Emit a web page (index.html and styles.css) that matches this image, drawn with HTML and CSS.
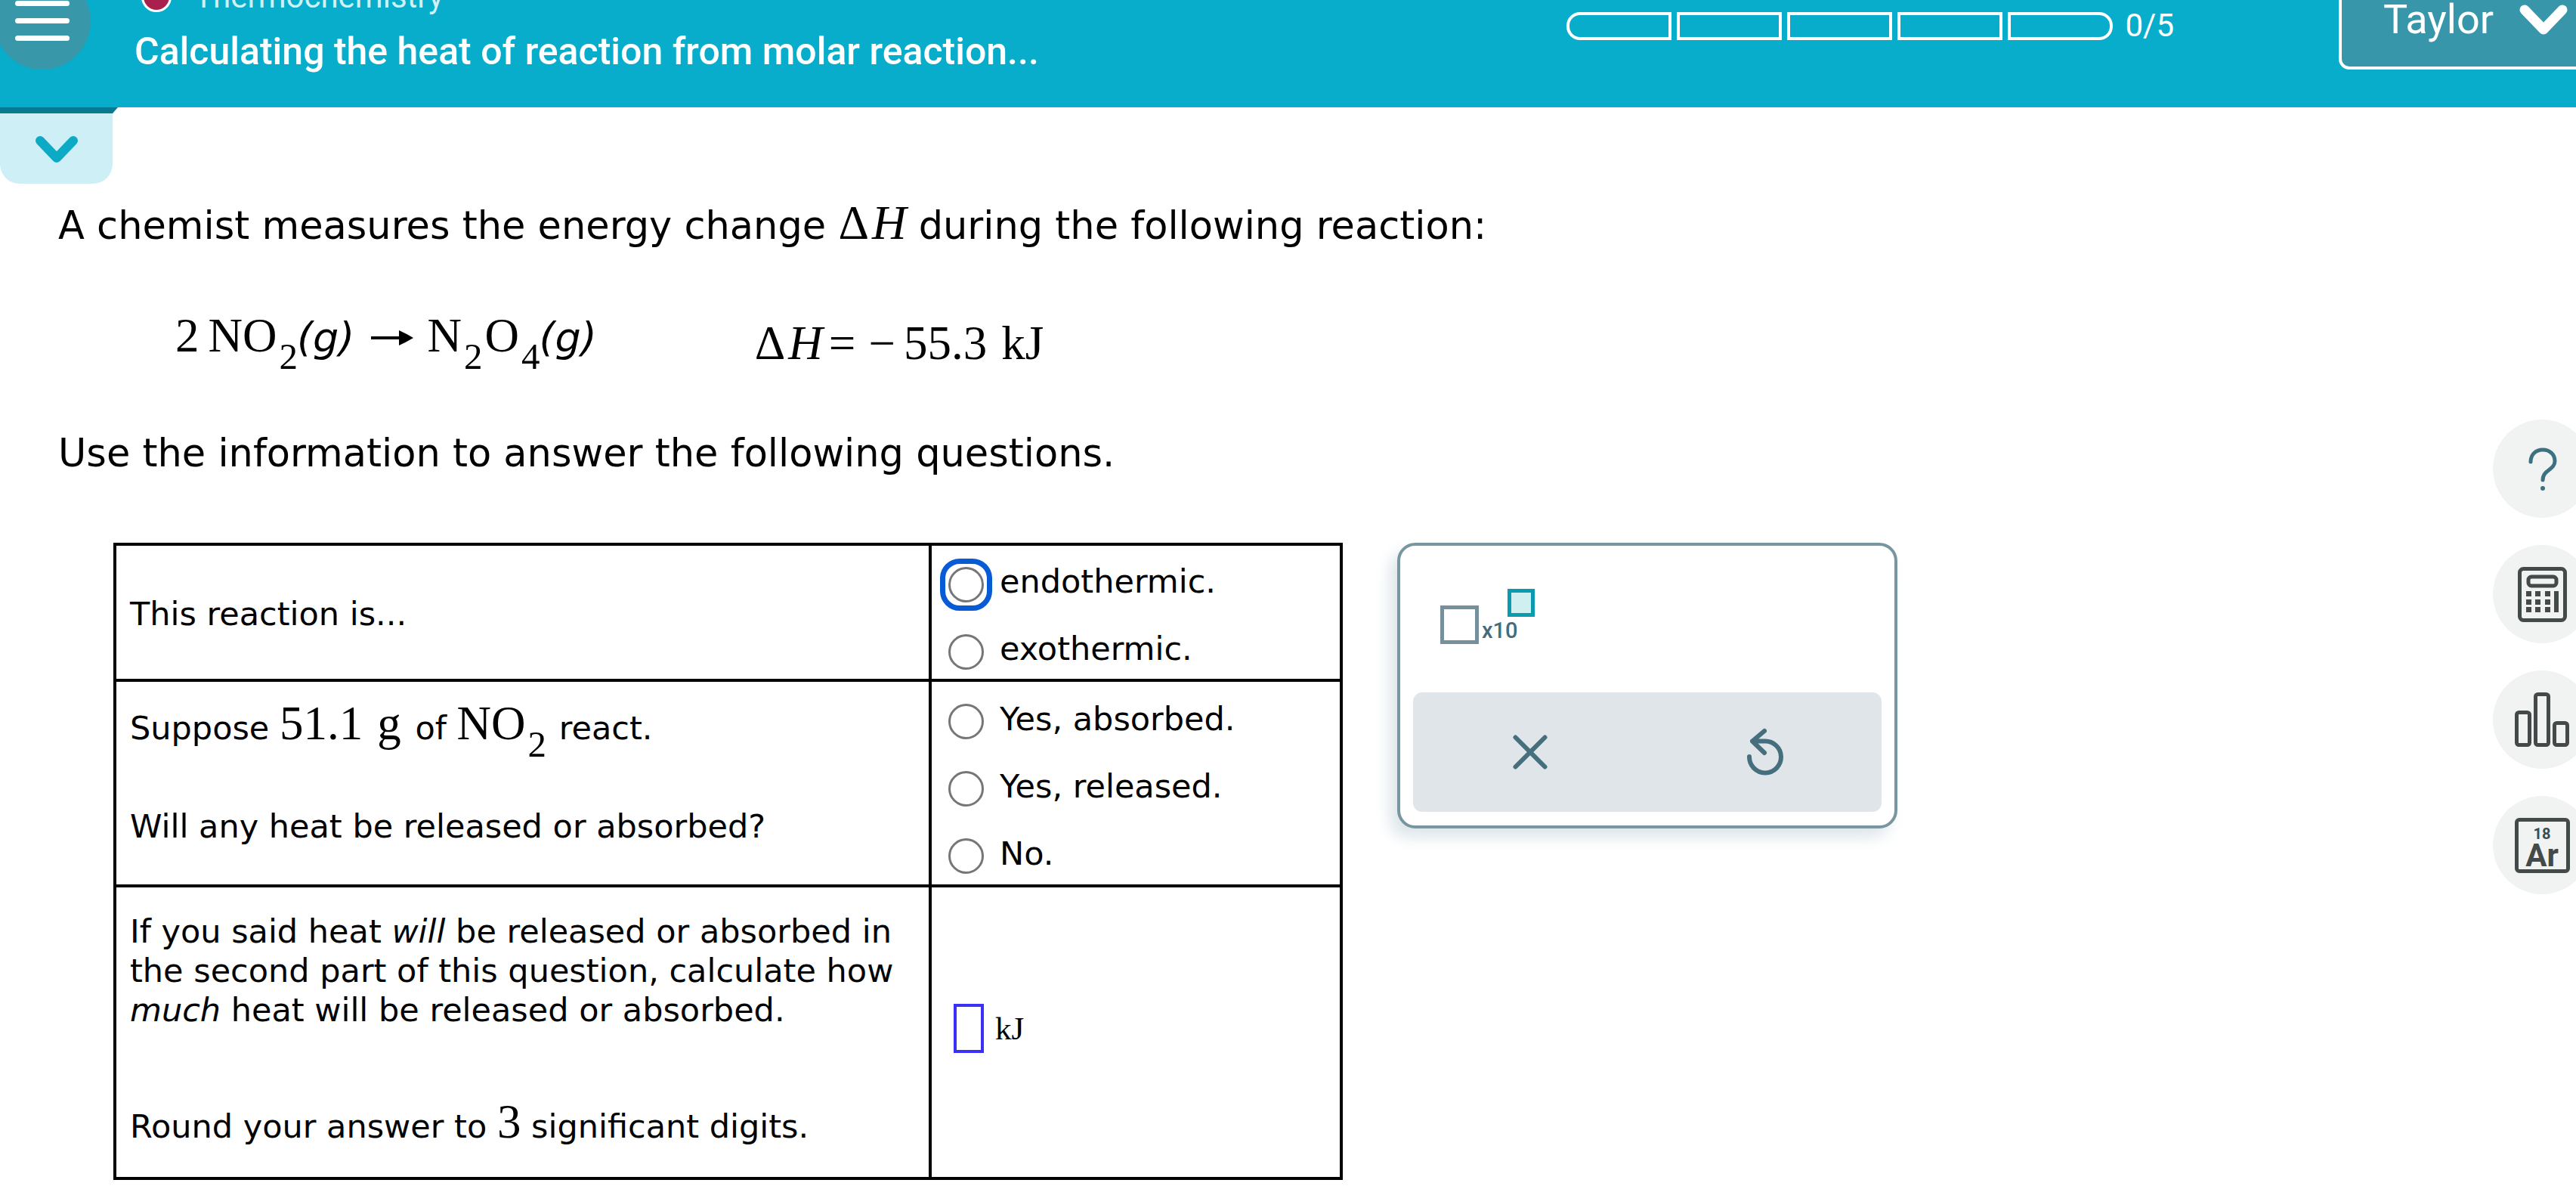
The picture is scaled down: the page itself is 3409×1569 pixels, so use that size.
FILE: index.html
```html
<!DOCTYPE html>
<html lang="en">
<head>
<meta charset="utf-8">
<title>Calculating the heat of reaction</title>
<link rel="stylesheet" href="styles.css">
</head>
<body>
<header class="topbar">
  <button class="menu-button" aria-label="Menu"><span class="menu-bar"></span><span class="menu-bar"></span><span class="menu-bar"></span></button>
  <div class="heading">
    <p class="topic"><span class="topic-dot"></span>Thermochemistry</p>
    <h1 class="title">Calculating the heat of reaction from molar reaction...</h1>
  </div>
  <div class="progress">
    <div class="steps"><span class="step"></span><span class="step"></span><span class="step"></span><span class="step"></span><span class="step"></span></div>
    <span class="score">0/5</span>
  </div>
  <button class="user-button">Taylor
    <svg class="user-chevron" viewBox="0 0 64 42" aria-hidden="true"><path d="M7 8 32 34 57 8"/></svg>
  </button>
</header>

<main>
  <button class="drawer-tab" aria-label="Expand">
    <svg class="drawer-lip" viewBox="0 0 156 8" aria-hidden="true"><path d="M0 0H156L149 8H0z"/></svg>
    <span class="drawer-body"><svg class="drawer-chevron" viewBox="0 0 58 38" aria-hidden="true"><path d="M7 7 29 30 51 7"/></svg></span>
  </button>

  <section class="problem">
    <p>A chemist measures the energy change <span class="math">Δ<i class="var">H</i></span> during the following reaction:</p>
    <div class="reaction">
      <div class="equation"><span class="coef">2</span>NO<sub>2</sub><i class="state">(g)</i><svg class="arrow" viewBox="0 0 56 36" aria-hidden="true"><path d="M0 16H37V8Q46 12 56 18Q46 24 37 28V20H0z"/></svg>N<sub>2</sub>O<sub>4</sub><i class="state">(g)</i></div>
      <div class="equation enthalpy">Δ<i class="var">H</i><span class="op">=</span><span class="op minus">−</span>55.3<span class="unit">kJ</span></div>
    </div>
    <p>Use the information to answer the following questions.</p>

    <div class="workspace">
      <table class="questions">
        <tr class="row-one">
          <td class="prompt">This reaction is...</td>
          <td class="answer">
            <div class="options">
              <label class="option"><input class="radio is-focused" type="radio" name="kind">endothermic.</label>
              <label class="option"><input class="radio" type="radio" name="kind">exothermic.</label>
            </div>
          </td>
        </tr>
        <tr class="row-two">
          <td class="prompt">
            <p class="suppose">Suppose <span class="math">51.1<span class="unit">g</span></span> of <span class="math">NO<sub>2</sub></span> react.</p>
            <p>Will any heat be released or absorbed?</p>
          </td>
          <td class="answer">
            <div class="options">
              <label class="option"><input class="radio" type="radio" name="heat">Yes, absorbed.</label>
              <label class="option"><input class="radio" type="radio" name="heat">Yes, released.</label>
              <label class="option"><input class="radio" type="radio" name="heat">No.</label>
            </div>
          </td>
        </tr>
        <tr class="row-three">
          <td class="prompt">
            <p class="explain">If you said heat <i>will</i> be released or absorbed in the second part of this question, calculate how <i>much</i> heat will be released or absorbed.</p>
            <p>Round your answer to <span class="math">3</span> significant digits.</p>
          </td>
          <td class="answer">
            <label class="amount"><input class="amount-box" type="text" aria-label="Heat in kJ">kJ</label>
          </td>
        </tr>
      </table>

      <aside class="keypad">
        <button class="sci-button" aria-label="Scientific notation"><span class="sci-base"></span><span class="sci-text">x10</span><span class="sci-exp"></span></button>
        <div class="keypad-actions">
          <button class="key" aria-label="Clear"><svg class="key-icon" viewBox="0 0 64 64"><path d="M12.500 12.500 51.500 51.500M51.500 12.500 12.500 51.500"/></svg></button>
          <button class="key" aria-label="Reset"><svg class="key-icon" viewBox="0 0 64 64"><path d="M32 4 16 17.500 32 33M16 17.500H32A21 21 0 1 1 12 38"/></svg></button>
        </div>
      </aside>
    </div>
  </section>
</main>

<nav class="rail" aria-label="Tools">
  <button class="tool help" aria-label="Help"><svg class="tool-icon" viewBox="0 0 130 130"><path d="M50 56C50 46 57 40 66 40S82 46 82 55C82 67 66 66 66 80"/><circle class="solid" cx="66" cy="91" r="3"/></svg></button>
  <button class="tool" aria-label="Calculator"><svg class="tool-icon" viewBox="0 0 130 130"><rect x="35.500" y="31.500" width="60" height="68" rx="5"/><rect x="47" y="42" width="37" height="12" rx="4"/><path class="solid" d="M44 61h7v7h-7zM56 61h7v7h-7zM69 61h7v7h-7zM44 72h7v7h-7zM56 72h7v7h-7zM69 72h7v7h-7zM44 82h7v7h-7zM56 82h7v7h-7zM69 82h7v7h-7zM81 61h6v28h-6z"/></svg></button>
  <button class="tool" aria-label="Data"><svg class="tool-icon" viewBox="0 0 130 130"><rect x="31.500" y="55.500" width="17" height="43" rx="3"/><rect x="56.500" y="31.500" width="17" height="67" rx="3"/><rect x="81.500" y="69.500" width="17" height="29" rx="3"/></svg></button>
  <button class="tool" aria-label="Periodic table"><span class="element"><span class="element-number">18</span><span class="element-symbol">Ar</span></span></button>
</nav>
</body>
</html>
```
FILE: styles.css
```css
* { box-sizing: border-box; }

body {
  margin: 0;
  background: #fff;
  color: #000;
  font-family: "DejaVu Sans", Verdana, sans-serif;
  font-size: 51px;
  line-height: 60px;
  overflow-x: hidden;
}

p, h1 { margin: 0; }

button {
  border: 0;
  padding: 0;
  background: none;
  color: inherit;
  font: inherit;
  cursor: pointer;
}

svg { display: block; fill: none; stroke-linecap: round; stroke-linejoin: round; }

/* Top bar */
.topbar {
  display: flex;
  align-items: flex-start;
  height: 142px;
  overflow: hidden;
  background: #07adca;
  color: #fff;
  font-family: Roboto, sans-serif;
}

.menu-button {
  display: flex;
  flex: none;
  flex-direction: column;
  align-items: center;
  gap: 16px;
  width: 128px;
  height: 128px;
  margin: -36px 0 0 -8px;
  padding-top: 37px;
  border-radius: 50%;
  background: #3997aa;
}

.menu-bar {
  width: 72px;
  height: 7px;
  border-radius: 4px;
  background: #fff;
}

.heading { margin: -40px 0 0 58px; }

.topic {
  display: flex;
  align-items: center;
  gap: 30px;
  padding-left: 9px;
  color: #d2f1f6;
  font-size: 42px;
  line-height: 72px;
}

.topic-dot {
  width: 40px;
  height: 40px;
  border: 3px solid #fff;
  border-radius: 50%;
  background: #a91f4d;
}

.title {
  font-size: 50px;
  font-weight: 500;
  line-height: 72px;
  white-space: nowrap;
}

.progress {
  display: flex;
  align-items: center;
  gap: 16px;
  margin: 4px 218px 0 auto;
  font-size: 42px;
}

.steps { display: flex; gap: 7px; }

.step {
  width: 139px;
  height: 37px;
  border: 4px solid #fff;
}

.step:first-child { border-radius: 18px 0 0 18px; }
.step:last-child { border-radius: 0 18px 18px 0; }

.user-button {
  display: flex;
  flex: none;
  align-items: center;
  gap: 34px;
  width: 334px;
  height: 112px;
  margin: -20px -20px 0 0;
  padding: 0 0 20px 55px;
  border: 4px solid #fff;
  border-radius: 14px;
  background: #3796a9;
  font-size: 54px;
}

.user-chevron { width: 64px; stroke: #fff; stroke-width: 13; }

/* Drawer handle under the bar */
.drawer-tab { display: block; width: 156px; }
.drawer-lip { width: 156px; fill: #057a90; }

.drawer-body {
  display: flex;
  align-items: center;
  justify-content: center;
  width: 149px;
  height: 93px;
  padding-top: 2px;
  border-radius: 0 0 26px 26px;
  background: #ceeff5;
}

.drawer-chevron { width: 58px; stroke: #0daac6; stroke-width: 12; }

/* Problem statement */
.problem { padding: 26px 0 8px 77px; }

.math {
  font-family: "Liberation Serif", "Times New Roman", serif;
  font-size: 63px;
  line-height: 0;
}

.var { padding-left: 4px; }

sub {
  margin: 0 3px;
  font-size: 49px;
  line-height: 0;
  vertical-align: -23px;
}

.unit { margin: 0 5px 0 19px; }

.reaction {
  display: flex;
  gap: 209px;
  padding: 79px 0 80px 155px;
}

.equation {
  display: flex;
  align-items: baseline;
  font-family: "Liberation Serif", "Times New Roman", serif;
  font-size: 63px;
  line-height: 72px;
  white-space: nowrap;
}

.equation sub { position: relative; top: 23px; }
.enthalpy { padding-top: 10px; }
.coef { margin-right: 12px; }

.state {
  margin-left: -4px;
  font-family: "DejaVu Sans", Verdana, sans-serif;
  font-size: 54px;
  line-height: 60px;
}

.arrow { width: 56px; margin: 0 18px 0 22px; fill: #000; }
.op { margin-left: 8px; }
.minus { margin: 0 11px 0 17px; }

/* Questions and keypad */
.workspace {
  display: flex;
  align-items: flex-start;
  gap: 72px;
  padding: 88px 180px 0 73px;
}

.questions {
  flex: 0 1 1627px;
  width: 1627px;
  border-collapse: collapse;
  table-layout: fixed;
  font-size: 43px;
  line-height: 52px;
}

.questions td { border: 4px solid #000; }
.questions .prompt { width: 1079px; padding: 4px 18px 0; }
.questions .row-two .prompt { padding-bottom: 20px; }
.questions .row-three .prompt { padding-bottom: 14px; }
.row-one { height: 180px; }
.row-two { height: 272px; }
.row-three { height: 387px; }
.suppose { padding-bottom: 78px; }
.explain { padding-bottom: 102px; }

.questions .answer { padding: 7px 20px 0 22px; }
.questions .row-three .answer { padding: 0 20px 10px 22px; }
.options { display: flex; flex-direction: column; gap: 9px; }

.option {
  display: flex;
  align-items: center;
  gap: 21px;
  height: 80px;
}

.radio {
  position: relative;
  appearance: none;
  width: 47px;
  height: 47px;
  margin: 8px 0 0;
  border: 3px solid #767676;
  border-radius: 50%;
  background: #fff;
}

.is-focused::after {
  content: "";
  position: absolute;
  inset: -14px;
  border: 7px solid #075bd4;
  border-radius: 26px;
}

.amount {
  display: flex;
  align-items: center;
  gap: 15px;
  padding-left: 7px;
  font-family: "Liberation Serif", "Times New Roman", serif;
}

.amount-box {
  width: 40px;
  height: 65px;
  padding: 0;
  border: 4px solid #3a30f6;
  background: #fff;
}

.keypad {
  flex: none;
  width: 662px;
  padding: 57px 17px 18px;
  border: 4px solid #78969f;
  border-radius: 24px;
  background: #fff;
  box-shadow: -10px 12px 20px #dde6ea;
}

.sci-button {
  display: flex;
  align-items: flex-end;
  height: 73px;
  margin: 0 0 64px 36px;
  color: #456c78;
  font-family: Roboto, sans-serif;
  font-size: 29px;
  font-weight: 500;
  line-height: 36px;
}

.sci-base { width: 51px; height: 51px; border: 5px solid #75909a; }
.sci-text { margin-left: 4px; }

.sci-exp {
  align-self: flex-start;
  width: 36px;
  height: 37px;
  margin-left: -14px;
  border: 5px solid #0b9bb1;
  background: #cfeff1;
}

.keypad-actions {
  display: flex;
  height: 158px;
  border-radius: 12px;
  background: #dfe5e8;
}

.key { display: flex; flex: 1; align-items: center; justify-content: center; }
.key-icon { width: 64px; stroke: #456f7d; stroke-width: 6; }

/* Floating tools at the right edge */
.rail {
  position: fixed;
  top: 555px;
  right: -20px;
  display: flex;
  flex-direction: column;
  gap: 36px;
}

.tool {
  display: flex;
  align-items: center;
  justify-content: center;
  width: 130px;
  height: 130px;
  border-radius: 50%;
  background: #f1f3f3;
  color: #434a49;
}

.help { color: #3d7080; }
.tool-icon { width: 130px; stroke: currentColor; stroke-width: 5; }
.tool-icon .solid { fill: currentColor; stroke: none; }

.element {
  display: flex;
  flex-direction: column;
  align-items: center;
  width: 73px;
  height: 73px;
  padding-top: 6px;
  border: 5px solid;
  border-radius: 6px;
  font-family: Roboto, sans-serif;
  font-weight: 700;
}

.element-number { font-size: 20px; line-height: 20px; }
.element-symbol { font-size: 42px; line-height: 38px; }
```
